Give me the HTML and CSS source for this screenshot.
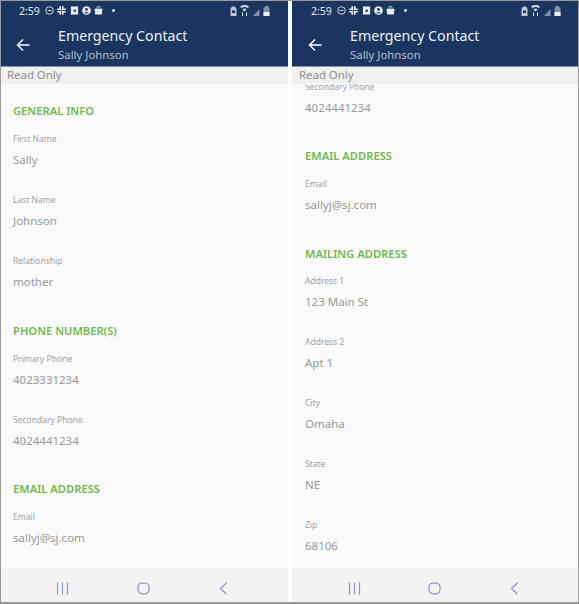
FILE: index.html
```html
<!DOCTYPE html>
<html lang="en">
<head>
    <meta charset="UTF-8">
    <meta name="viewport" content="width=device-width, initial-scale=1.0">
    <title>Emergency Contact</title>
    <link rel="stylesheet" href="styles.css">
</head>
<body>
    <svg class="sprite" width="0" height="0">
        <symbol id="i-dnd" viewBox="0 0 10 10"><circle cx="5" cy="5" r="4.200" fill="none" stroke="currentColor"/><path d="M2.800 5h4.400" stroke="currentColor"/></symbol>
        <symbol id="i-slack" viewBox="0 0 10 10"><path d="M3.600 1v3M6.400 6v3M1 6.400h3M6 3.600h3M6.400 1v1M3.600 8v1M1 3.600h1M8 6.400h1" stroke="currentColor" stroke-width="1.900" stroke-linecap="round"/></symbol>
        <symbol id="i-cal" viewBox="0 0 10 10"><path d="M1 0.500h8v9H1z" fill="currentColor"/><path d="M4 4h2.500v2.500H4z" fill="#1a3560"/></symbol>
        <symbol id="i-user" viewBox="0 0 10 10"><circle cx="5" cy="5" r="4.800" fill="currentColor"/><circle cx="5" cy="3.800" r="1.500" fill="#1a3560"/><path d="M2.400 8a2.800 2.200 0 0 1 5.200 0z" fill="#1a3560"/></symbol>
        <symbol id="i-bag" viewBox="0 0 10 10"><path d="M0.500 3h9l-0.800 6.500H1.300z" fill="currentColor"/><path d="M3.300 3V2a1.700 1.700 0 0 1 3.400 0v1" fill="none" stroke="currentColor"/></symbol>
        <symbol id="i-lock" viewBox="0 0 7 10"><path d="M0.500 3L2 0.500h3L6.500 3v7h-6z" fill="currentColor" opacity="0.8"/><path d="M2 4.500h3V7H2z" fill="#1a3560"/></symbol>
        <symbol id="i-wifi" viewBox="0 0 9 11"><path d="M0 1.500a7 7 0 0 1 9 0L7.600 3.200a5 5 0 0 0-6.200 0zM2.400 4.300a3.400 3.400 0 0 1 4.200 0L4.500 6.800z" fill="currentColor" opacity="0.85"/><path d="M2.500 7.500v3.500M6.500 7.500v3.500" stroke="currentColor"/></symbol>
        <symbol id="i-signal" viewBox="0 0 7 7"><path d="M6.500 0v7H0z" fill="currentColor" opacity="0.5"/></symbol>
        <symbol id="i-battery" viewBox="0 0 7 10"><path d="M2 0h3v1.200H2z" fill="currentColor" opacity="0.6"/><path d="M0.500 1.200h6V10h-6z" fill="currentColor" opacity="0.5"/><path d="M0.500 6h6v4h-6z" fill="currentColor"/></symbol>
        <symbol id="i-back" viewBox="0 0 14 14"><path d="M13.500 7H1.500M7 1.500L1.500 7 7 12.500" fill="none" stroke="currentColor" stroke-width="1.400"/></symbol>
        <symbol id="i-recents" viewBox="0 0 13 13"><path d="M1.500 0.500v12M6.500 0.500v12M11.500 0.500v12" stroke="currentColor" stroke-width="1.200"/></symbol>
        <symbol id="i-home" viewBox="0 0 14 13"><rect x="1" y="0.800" width="12" height="11.400" rx="4.500" fill="none" stroke="currentColor" stroke-width="1.400"/></symbol>
        <symbol id="i-navback" viewBox="0 0 13 13"><path d="M9.500 0.800L3.500 6.500l6 5.700" fill="none" stroke="currentColor" stroke-width="1.300"/></symbol>
    </svg>

    <div class="phones">
        <div class="phone">
            <div class="status-bar">
                <span class="status-time">2:59</span>
                <svg class="status-icon"><use href="#i-dnd"/></svg>
                <svg class="status-icon"><use href="#i-slack"/></svg>
                <svg class="status-icon"><use href="#i-cal"/></svg>
                <svg class="status-icon"><use href="#i-user"/></svg>
                <svg class="status-icon"><use href="#i-bag"/></svg>
                <span class="status-dot"></span>
                <svg class="tray-lock"><use href="#i-lock"/></svg>
                <svg class="tray-wifi"><use href="#i-wifi"/></svg>
                <svg class="tray-signal"><use href="#i-signal"/></svg>
                <svg class="tray-battery"><use href="#i-battery"/></svg>
            </div>
            <div class="app-bar">
                <svg class="back-arrow"><use href="#i-back"/></svg>
                <div class="app-bar-text">
                    <div class="title">Emergency Contact</div>
                    <div class="subtitle">Sally Johnson</div>
                </div>
            </div>
            <div class="read-only">Read Only</div>
            <div class="content">
                <div class="section-title general">GENERAL INFO</div>
                <div class="field"><div class="field-label">First Name</div><div class="field-value">Sally</div></div>
                <div class="field"><div class="field-label">Last Name</div><div class="field-value">Johnson</div></div>
                <div class="field"><div class="field-label">Relationship</div><div class="field-value">mother</div></div>
                <div class="section-title phone-numbers">PHONE NUMBER(S)</div>
                <div class="field"><div class="field-label">Primary Phone</div><div class="field-value">4023331234</div></div>
                <div class="field"><div class="field-label">Secondary Phone</div><div class="field-value">4024441234</div></div>
                <div class="section-title email">EMAIL ADDRESS</div>
                <div class="field"><div class="field-label">Email</div><div class="field-value">sallyj@sj.com</div></div>
            </div>
            <div class="nav-bar">
                <svg class="nav-icon"><use href="#i-recents"/></svg>
                <svg class="nav-icon"><use href="#i-home"/></svg>
                <svg class="nav-icon"><use href="#i-navback"/></svg>
            </div>
        </div>

        <div class="phone">
            <div class="status-bar">
                <span class="status-time">2:59</span>
                <svg class="status-icon"><use href="#i-dnd"/></svg>
                <svg class="status-icon"><use href="#i-slack"/></svg>
                <svg class="status-icon"><use href="#i-cal"/></svg>
                <svg class="status-icon"><use href="#i-user"/></svg>
                <svg class="status-icon"><use href="#i-bag"/></svg>
                <span class="status-dot"></span>
                <svg class="tray-lock"><use href="#i-lock"/></svg>
                <svg class="tray-wifi"><use href="#i-wifi"/></svg>
                <svg class="tray-signal"><use href="#i-signal"/></svg>
                <svg class="tray-battery"><use href="#i-battery"/></svg>
            </div>
            <div class="app-bar">
                <svg class="back-arrow"><use href="#i-back"/></svg>
                <div class="app-bar-text">
                    <div class="title">Emergency Contact</div>
                    <div class="subtitle">Sally Johnson</div>
                </div>
            </div>
            <div class="read-only">Read Only</div>
            <div class="content scrolled">
                <div class="field"><div class="field-label">Secondary Phone</div><div class="field-value">4024441234</div></div>
                <div class="section-title email">EMAIL ADDRESS</div>
                <div class="field"><div class="field-label">Email</div><div class="field-value">sallyj@sj.com</div></div>
                <div class="section-title">MAILING ADDRESS</div>
                <div class="field"><div class="field-label">Address 1</div><div class="field-value">123 Main St</div></div>
                <div class="field"><div class="field-label">Address 2</div><div class="field-value">Apt 1</div></div>
                <div class="field"><div class="field-label">City</div><div class="field-value">Omaha</div></div>
                <div class="field"><div class="field-label">State</div><div class="field-value">NE</div></div>
                <div class="field"><div class="field-label">Zip</div><div class="field-value">68106</div></div>
            </div>
            <div class="nav-bar">
                <svg class="nav-icon"><use href="#i-recents"/></svg>
                <svg class="nav-icon"><use href="#i-home"/></svg>
                <svg class="nav-icon"><use href="#i-navback"/></svg>
            </div>
        </div>
    </div>
</body>
</html>
```

FILE: styles.css
```css
html, body {
    margin: 0;
    padding: 0;
    height: 100%;
    background-color: white;
}

body {
    font-family: "Noto Sans", "Open Sans", sans-serif;
    overflow: hidden;
}

.sprite {
    position: absolute;
}

.phones {
    position: relative;
    display: grid;
    grid-template-columns: 288px 287px;
    column-gap: 4px;
    height: 604px;
}

/* screenshot frame, drawn over the phones */
.phones::after {
    content: "";
    position: absolute;
    top: 0;
    right: 0;
    bottom: 0;
    left: 0;
    border: 1px solid #9a9a9a;
    border-bottom-width: 2px;
    pointer-events: none;
}

.phone {
    display: flex;
    flex-direction: column;
    height: 604px;
    background-color: #fafafa;
    overflow: hidden;
}

.status-bar {
    height: 23px;
    flex-shrink: 0;
    box-sizing: border-box;
    display: flex;
    align-items: center;
    gap: 3.400px;
    padding: 0 18px 2px 19px;
    background-color: #1a3560;
    color: #e8ebf0;
}

.status-time {
    font-size: 10.500px;
    margin-right: 1.500px;
}

.status-icon {
    width: 9px;
    height: 9px;
}

.status-dot {
    width: 3px;
    height: 3px;
    margin-left: 5px;
    border-radius: 50%;
    background-color: #e8ebf0;
}

.tray-lock {
    width: 7px;
    height: 10px;
    margin-left: auto;
}

.tray-wifi {
    width: 9px;
    height: 11px;
}

.tray-signal {
    width: 7px;
    height: 7px;
    margin-top: 3px;
}

.tray-battery {
    width: 7px;
    height: 10px;
}

.app-bar {
    height: 44px;
    flex-shrink: 0;
    box-sizing: border-box;
    display: flex;
    align-items: center;
    padding-left: 16px;
    background-color: #1a3560;
    border-bottom: 1px solid #8593a8;
}

.back-arrow {
    width: 14px;
    height: 14px;
    margin-right: 28px;
    margin-top: 1px;
    color: white;
}

.app-bar-text {
    margin-top: 2px;
}

.title {
    font-size: 14.200px;
    line-height: 18px;
    color: #eef0f4;
}

.subtitle {
    font-size: 11.400px;
    line-height: 20px;
    color: #b4bccb;
}

.read-only {
    height: 17px;
    flex-shrink: 0;
    padding-left: 7px;
    font-size: 11.400px;
    line-height: 15px;
    color: #8f8f8f;
    background-color: #f0f0f0;
}

.content {
    flex: 1;
    overflow: hidden;
    padding-left: 13px;
}

.scrolled .field:first-child {
    margin-top: -5px;
}

.section-title {
    height: 20px;
    margin: 7px 0 9px;
    font-size: 11.200px;
    font-weight: 600;
    line-height: 20px;
    color: #6dba4c;
}

.section-title.general {
    margin: 17px 0 10px;
}

.section-title.phone-numbers {
    margin-bottom: 10px;
}

.section-title.email {
    margin: 6px 0 10px;
}

.field {
    height: 61px;
}

.field-label {
    height: 16px;
    font-size: 8.500px;
    line-height: 16px;
    color: #a3a3a3;
}

.field-value {
    margin-top: 5px;
    font-size: 11.500px;
    line-height: 16px;
    color: #999;
}

.nav-bar {
    height: 35px;
    flex-shrink: 0;
    box-sizing: border-box;
    display: flex;
    align-items: center;
    justify-content: space-between;
    padding: 3px 58px 0 56px;
    background-color: #f3f3f3;
    color: #8b9ac9;
}

.nav-icon {
    width: 13px;
    height: 13px;
}
```
